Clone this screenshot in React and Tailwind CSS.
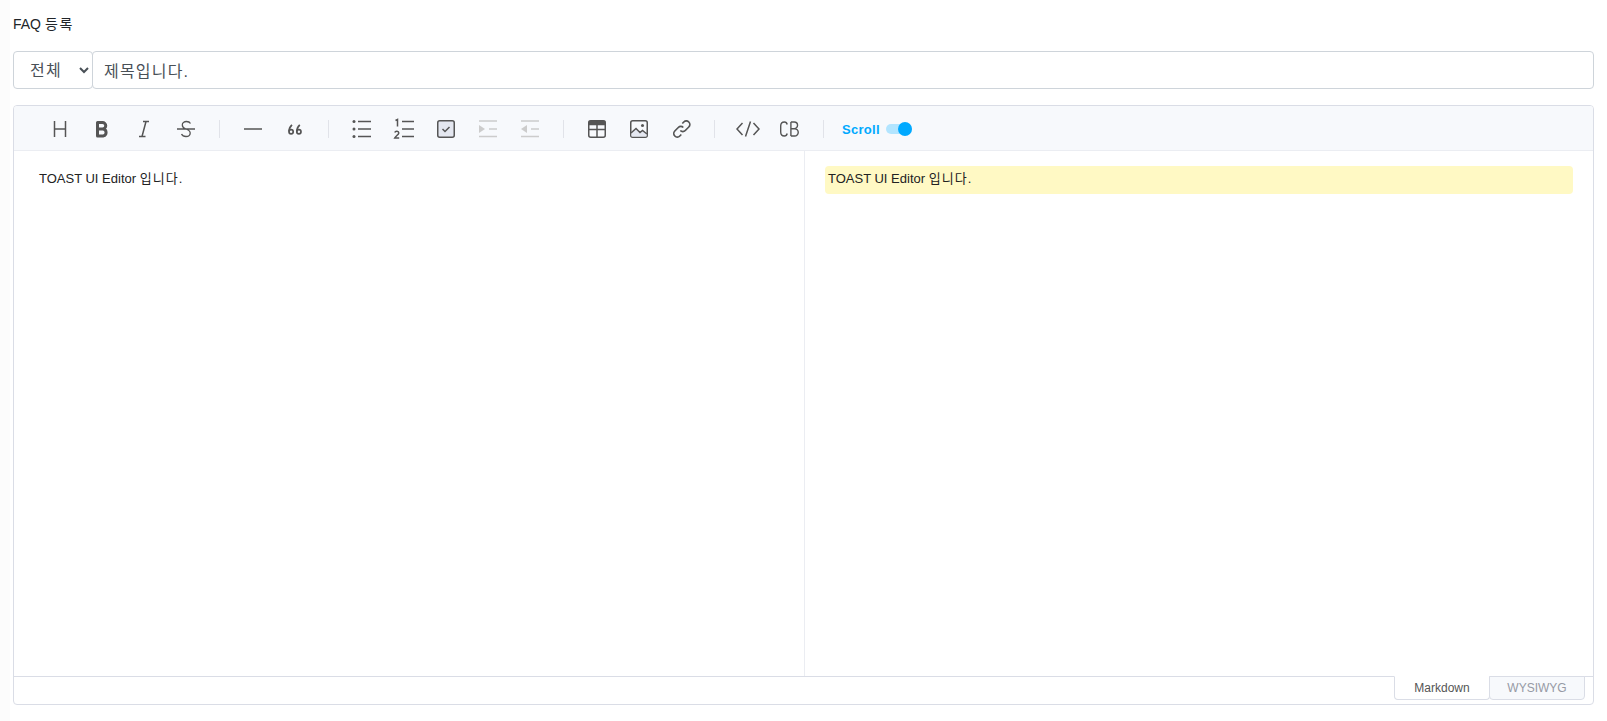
import React from "react";

const S = ({ children, c = "#555555", w = 1.5 }) => (
  <svg width="24" height="24" viewBox="0 0 24 24" fill="none" stroke={c} strokeWidth={w}>{children}</svg>
);
const Btn = ({ children }) => (
  <button type="button" className="w-8 h-8 mx-[5px] flex items-center justify-center shrink-0">{children}</button>
);
const Sep = () => <div className="w-px h-[18px] mx-3 bg-[#e1e3e9] shrink-0" />;
const Line = () => (
  <>
    TOAST UI Editor <span className="tracking-[1.04px]">입니다</span>.
  </>
);

export default function App() {
  return (
    <div className="w-[1607px] h-[721px] bg-[#fcfcfc] pl-[10px] font-['Liberation_Sans','Noto_Sans_CJK_KR',sans-serif] overflow-hidden">
      <div className="h-full bg-white pl-[3px] pr-[13px]">
        <h1 className="pt-[15px] h-[51px] text-sm leading-[18px] text-[#212529] font-normal">
          FAQ <span className="tracking-[1.8px]">등록</span>
        </h1>
        <div className="flex h-[38px]">
          <select className="w-[80px] h-[38px] pl-[12px] pr-1 text-base tracking-[1.3px] text-[#495057] bg-white border border-[#ced4da] rounded shrink-0" defaultValue="전체">
            <option>전체</option>
          </select>
          <input className="flex-1 -ml-px h-[38px] px-[11px] text-base tracking-[1.2px] text-[#495057] bg-white border border-[#ced4da] rounded outline-none" defaultValue="제목입니다." />
        </div>
        <div className="mt-4 h-[600px] border border-[#dadde6] rounded flex flex-col overflow-hidden">
          <div className="h-[45px] bg-[#f7f9fc] border-b border-[#ebedf2] pl-[25px] pt-[2px] flex items-center shrink-0">
            <Btn><S><path d="M6.500 4v16M17.500 4v16M6.500 12h11" /></S></Btn>
            <Btn><S w={3}><path d="M7.500 5.500h5a3.200 3.200 0 0 1 0 6.500h-5zM7.500 12h6a3.600 3.600 0 0 1 0 6.900h-6z" strokeLinejoin="round" /></S></Btn>
            <Btn><S><path d="M11 4.500h6M7 19.500h6.500M14 4.500l-4 15" /></S></Btn>
            <Btn><S w={1.300}><path d="M3 12h18M16.500 6.500C15.700 5 14.200 4.500 12.500 4.500 10 4.500 8.300 5.800 8.300 8c0 2.200 1.700 3.200 3.700 4 2.400.9 4.200 1.800 4.200 4 0 2.400-1.800 3.500-4.200 3.500-2 0-3.700-.8-4.500-2.500" /></S></Btn>
            <Sep />
            <Btn><S><path d="M3 12h18" /></S></Btn>
            <Btn><S w={1.700}><path d="M6 14.500c0-2.700.9-4.800 3-6.700M13.800 14.500c0-2.700.9-4.800 3-6.700" /><circle cx="8.100" cy="14.700" r="2.100" /><circle cx="15.900" cy="14.700" r="2.100" /></S></Btn>
            <Sep />
            <Btn><S><path d="M8 4.500h13M8 12h13M8 19.500h13" /><circle cx="4" cy="4.500" r="1.500" fill="#555555" stroke="none" /><circle cx="4" cy="12" r="1.500" fill="#555555" stroke="none" /><circle cx="4" cy="19.500" r="1.500" fill="#555555" stroke="none" /></S></Btn>
            <Btn><S><path d="M10 4.500h12M10 12h12M10 19.500h12" /><path d="M3.500 3.500 5.500 2.500v7" /><path d="M2.800 15.500c.5-1.600 4-1.600 4 .4 0 1.500-2.800 3-4 5h4.400" /></S></Btn>
            <Btn><S><rect x="3.750" y="3.750" width="16.500" height="16.500" rx="2" fill="#e4e7f0" /><path d="m8.500 12 2.500 2.500 4.500-4.500" /></S></Btn>
            <Btn><S c="#cccccc"><path d="M3 4h18M3 19.500h18M13 12h8" /><path d="M3 8l6 4-6 4z" fill="#cccccc" stroke="none" /></S></Btn>
            <Btn><S c="#cccccc"><path d="M3 4h18M3 19.500h18M13 12h8" /><path d="M9 8l-6 4 6 4z" fill="#cccccc" stroke="none" /></S></Btn>
            <Sep />
            <Btn><S><rect x="3.750" y="3.750" width="16.500" height="16.500" rx="2" /><path d="M3.750 6h16.500" strokeWidth="4.500" /><path d="M3.750 12.500h16.500M12 4v16" /></S></Btn>
            <Btn><S><rect x="3.750" y="3.750" width="16.500" height="16.500" rx="2" /><path d="M4.500 19.500v-3.500l4.500-4.500 4 4 2.500-2 4 3.200v2.800z" fill="#e4e7f0" stroke="none" /><path d="m4 16 5-4.500 4 4 2.500-2 4.500 3.500" /><circle cx="15.500" cy="8.500" r="1.500" fill="#555555" stroke="none" /></S></Btn>
            <Btn><S w={1.700}><g transform="translate(.8 0)"><path d="M10.500 13.500a3.500 3.500 0 0 0 5 0l3.500-3.500a3.500 3.500 0 0 0-5-5l-1.500 1.500" /><path d="M13.500 10.500a3.500 3.500 0 0 0-5 0L5 14a3.500 3.500 0 0 0 5 5l1.500-1.500" /></g></S></Btn>
            <Sep />
            <Btn><S><path d="M6.500 6 1 12l5.500 6M17.500 6 23 12l-5.500 6M14.500 4.500l-5 15" /></S></Btn>
            <Btn><S w={1.400}><g transform="translate(-.8 0)"><path d="M10 7.500C9.700 6 8.700 5 7.200 5 5 5 3.500 6.500 3.500 9v6c0 2.500 1.500 4 3.700 4 1.500 0 2.500-1 2.800-2.500M13.700 5v14M13.700 5h3.300a3.300 3.300 0 0 1 0 6.700h-3.300M13.700 11.700h3.700a3.650 3.650 0 0 1 0 7.300h-3.700" /></g></S></Btn>
            <Sep />
            <div className="flex items-center ml-[6px]">
              <span className="text-[13px] font-bold text-[#00a9ff] leading-none tracking-[.3px]">Scroll</span>
              <div className="relative ml-[6px] w-[26px] h-[10px] rounded-full bg-[#b2e5ff]">
                <div className="absolute right-0 -top-[2px] w-[14px] h-[14px] rounded-full bg-[#00a9ff]" />
              </div>
            </div>
          </div>
          <div className="flex-1 flex min-h-0">
            <div className="w-[791px] border-r border-[#ebedf2] pl-[25px] pt-[19px] text-[13px] leading-[18px] text-[#222222]"><Line /></div>
            <div className="flex-1 px-[20px] pt-[15px]">
              <div className="h-[28px] pb-[3px] rounded bg-[#fff9c4] pl-[3px] flex items-center text-[13px] text-[#222222]">
                <span><Line /></span>
              </div>
            </div>
          </div>
          <div className="h-[28px] border-t border-[#dadde6] flex justify-end pr-2 shrink-0">
            <div className="h-[24px] -mt-px w-[96px] bg-white border border-t-white border-[#dadde6] rounded-b text-xs text-[#555555] flex items-center justify-center">Markdown</div>
            <div className="h-[24px] -mt-px w-[96px] -ml-px bg-[#f7f9fc] border border-[#dadde6] rounded-b text-xs text-[#969aa5] flex items-center justify-center">WYSIWYG</div>
          </div>
        </div>
      </div>
    </div>
  );
}
